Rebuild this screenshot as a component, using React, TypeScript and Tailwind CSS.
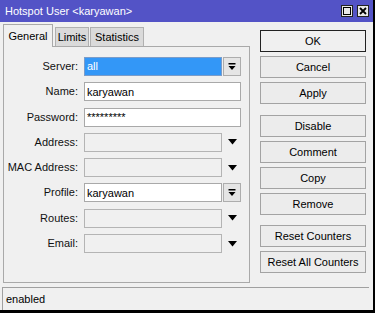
import React from "react";

const font = { fontFamily: '"Liberation Sans", Arial, sans-serif' };

function DropBtn() {
  return (
    <div className="ml-[1px] flex h-[19px] w-[18px] items-center justify-center border border-[#adadad] bg-[#e5e5e5]">
      <svg width="8" height="8" viewBox="0 0 8 8">
        <rect x="0.5" y="0" width="7" height="1.5" fill="#000" />
        <polygon points="0.5,3 7.5,3 4,7" fill="#000" />
      </svg>
    </div>
  );
}

function Tri() {
  return (
    <div className="flex h-[19px] w-[18px] items-center justify-center ml-[1px]">
      <svg width="9" height="6" viewBox="0 0 9 6">
        <polygon points="0,0 9,0 4.5,5.5" fill="#000" />
      </svg>
    </div>
  );
}

type Row = {
  label: string;
  kind: "select" | "text" | "empty" | "selected";
  value?: string;
};

const rows: Row[] = [
  { label: "Server:", kind: "selected", value: "all" },
  { label: "Name:", kind: "text", value: "karyawan" },
  { label: "Password:", kind: "text", value: "*********" },
  { label: "Address:", kind: "empty" },
  { label: "MAC Address:", kind: "empty" },
  { label: "Profile:", kind: "select", value: "karyawan" },
  { label: "Routes:", kind: "empty" },
  { label: "Email:", kind: "empty" },
];

function FormRow({ r }: { r: Row }) {
  return (
    <div className="flex h-[19px] items-center">
      <div className="w-[74px] text-right text-[11px] text-[#111] leading-none">{r.label}</div>
      <div className="ml-[6px] flex items-center">
        {r.kind === "text" && (
          <div className="flex h-[19px] w-[157px] items-center border border-[#a9a9a9] bg-white pl-[2px] text-[11px] text-black">
            {r.value}
          </div>
        )}
        {r.kind === "selected" && (
          <>
            <div className="flex h-[19px] w-[138px] items-center border border-[#7a9cc9] bg-[#3397f7] pl-[2px] text-[11px] text-white">
              {r.value}
            </div>
            <DropBtn />
          </>
        )}
        {r.kind === "select" && (
          <>
            <div className="flex h-[19px] w-[138px] items-center border border-[#a9a9a9] bg-white pl-[2px] text-[11px] text-black">
              {r.value}
            </div>
            <DropBtn />
          </>
        )}
        {r.kind === "empty" && (
          <>
            <div className="h-[19px] w-[138px] border border-[#b4b4b4] bg-[#f0f0f0]" />
            <Tri />
          </>
        )}
      </div>
    </div>
  );
}

function Btn({ label, def }: { label: string; def?: boolean }) {
  return (
    <div
      className={
        "flex h-[22px] w-[106px] items-center justify-center text-[11px] text-black " +
        (def ? "border border-[#222] bg-[#f0f0f0]" : "border border-[#a3a3a3] bg-[#ececec]")
      }
    >
      {label}
    </div>
  );
}

export default function App() {
  return (
    <div
      style={font}
      className="flex h-[313px] w-[375px] flex-col border-r-[2px] border-b-[3px] border-black bg-[#f0f0f0]"
    >
      {/* Title bar */}
      <div className="flex h-[22px] shrink-0 items-center bg-[#5353c6] pl-[5px] pr-[4px]">
        <div className="text-[11px] text-white">Hotspot User &lt;karyawan&gt;</div>
        <div className="ml-auto flex items-center gap-[4px]">
          <div className="flex h-[12px] w-[12px] items-center justify-center border border-[#222] bg-[#e8e8e8]">
            <div className="h-[8px] w-[8px] border-[1.5px] border-black" />
          </div>
          <div className="flex h-[12px] w-[12px] items-center justify-center border border-[#222] bg-[#e8e8e8]">
            <svg width="8" height="8" viewBox="0 0 8 8">
              <path d="M1 1 L7 7 M7 1 L1 7" stroke="#000" strokeWidth="1.8" />
            </svg>
          </div>
        </div>
      </div>

      {/* Body */}
      <div className="flex flex-1 pl-[3px] pt-[2px]">
        <div className="flex w-[247px] flex-col">
          {/* Tabs */}
          <div className="flex h-[22px] items-end">
            <div className="relative z-10 -mb-[1px] flex h-[23px] w-[50px] items-center justify-center border border-b-0 border-[#a9a9a9] bg-[#f0f0f0] text-[11px] text-black">
              General
            </div>
            <div className="ml-[2px] flex h-[19px] w-[34px] items-center justify-center border border-b-0 border-[#b0b0b0] bg-[#dadada] text-[11px] text-black">
              Limits
            </div>
            <div className="ml-[1px] flex h-[19px] w-[54px] items-center justify-center border border-b-0 border-[#b0b0b0] bg-[#dadada] text-[11px] text-black">
              Statistics
            </div>
          </div>
          {/* Panel */}
          <div className="flex h-[237px] flex-col gap-[6.3px] border border-[#a9a9a9] bg-[#f0f0f0] pt-[10px]">
            {rows.map((r) => (
              <FormRow key={r.label} r={r} />
            ))}
          </div>
        </div>

        {/* Buttons */}
        <div className="ml-[10px] flex flex-col pt-[6px]">
          <div className="flex flex-col gap-[4px]">
            <Btn label="OK" def />
            <Btn label="Cancel" />
            <Btn label="Apply" />
          </div>
          <div className="mt-[11px] flex flex-col gap-[4px]">
            <Btn label="Disable" />
            <Btn label="Comment" />
            <Btn label="Copy" />
            <Btn label="Remove" />
          </div>
          <div className="mt-[10px] flex flex-col gap-[4px]">
            <Btn label="Reset Counters" />
            <Btn label="Reset All Counters" />
          </div>
        </div>
      </div>

      {/* Status bar */}
      <div className="ml-[2px] mr-[4px] flex h-[23px] shrink-0 items-center border-l border-t border-[#a0a0a0] pl-[3px] text-[11px] text-black">
        enabled
      </div>
    </div>
  );
}
